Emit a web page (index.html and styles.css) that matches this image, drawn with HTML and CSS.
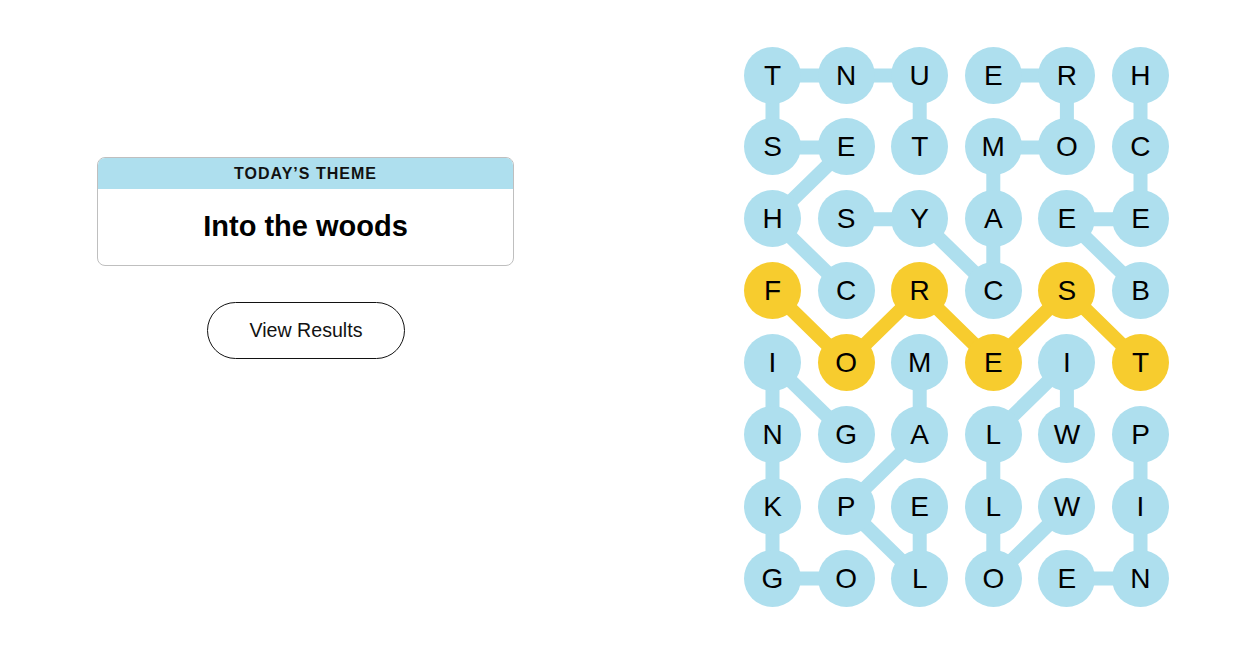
FILE: index.html
```html
<!DOCTYPE html>
<html lang="en">
<head>
<meta charset="utf-8">
<title>Strands</title>
<link rel="stylesheet" href="styles.css">
</head>
<body>
<main class="game">
  <section class="side">
    <div class="theme-card">
      <div class="theme-head">Today’s Theme</div>
      <div class="theme-body">Into the woods</div>
    </div>
    <button class="results-btn" type="button">View Results</button>
  </section>
  <section class="board">
    <svg class="links" viewBox="0 0 425 560" width="425" height="560" aria-hidden="true">
      <g class="blue">
        <path d="M28.5 28.5H175.7V100.4"/>
        <path d="M28.5 28.5V100.4H102.1L28.5 172.2L102.1 244.1"/>
        <path d="M249.3 28.5H322.9V100.4H249.3V244.1"/>
        <path d="M102.1 172.2H175.7L249.3 244.1"/>
        <path d="M396.5 28.5V172.2H322.9L396.5 244.1"/>
        <path d="M28.5 315.9V531.5H102.1"/>
        <path d="M28.5 315.9L102.1 387.8"/>
        <path d="M175.7 315.9V387.8L102.1 459.7L175.7 531.5V459.7"/>
        <path d="M322.9 315.9V387.8"/>
        <path d="M322.9 315.9L249.3 387.8V531.5L322.9 459.7"/>
        <path d="M322.9 531.5H396.5V387.8"/>
      </g>
      <path class="gold" d="M28.5 244.1L102.1 315.9L175.7 244.1L249.3 315.9L322.9 244.1L396.5 315.9"/>
    </svg>
    <div class="grid">
      <span class="cell">T</span><span class="cell">N</span><span class="cell">U</span><span class="cell">E</span><span class="cell">R</span><span class="cell">H</span>
      <span class="cell">S</span><span class="cell">E</span><span class="cell">T</span><span class="cell">M</span><span class="cell">O</span><span class="cell">C</span>
      <span class="cell">H</span><span class="cell">S</span><span class="cell">Y</span><span class="cell">A</span><span class="cell">E</span><span class="cell">E</span>
      <span class="cell span">F</span><span class="cell">C</span><span class="cell span">R</span><span class="cell">C</span><span class="cell span">S</span><span class="cell">B</span>
      <span class="cell">I</span><span class="cell span">O</span><span class="cell">M</span><span class="cell span">E</span><span class="cell">I</span><span class="cell span">T</span>
      <span class="cell">N</span><span class="cell">G</span><span class="cell">A</span><span class="cell">L</span><span class="cell">W</span><span class="cell">P</span>
      <span class="cell">K</span><span class="cell">P</span><span class="cell">E</span><span class="cell">L</span><span class="cell">W</span><span class="cell">I</span>
      <span class="cell">G</span><span class="cell">O</span><span class="cell">L</span><span class="cell">O</span><span class="cell">E</span><span class="cell">N</span>
    </div>
  </section>
</main>
</body>
</html>
```

FILE: styles.css
```css
* { box-sizing: border-box; }

html, body {
  margin: 0;
  padding: 0;
  background: #ffffff;
}

body {
  font-family: "Liberation Sans", Arial, sans-serif;
  color: #000000;
  width: 1250px;
  height: 658px;
  overflow: hidden;
}

.game {
  display: flex;
  align-items: flex-start;
  gap: 230px;
  padding: 46.5px 0 0 97px;
}

.side {
  width: 417px;
  margin-top: 110.5px;
  display: flex;
  flex-direction: column;
  align-items: center;
}

.theme-card {
  width: 417px;
  border: 1px solid #bfbfbf;
  border-radius: 8px;
  overflow: hidden;
  background: #fff;
}

.theme-head {
  height: 31px;
  background: #aedfee;
  display: flex;
  align-items: center;
  justify-content: center;
  font-size: 16px;
  font-weight: 700;
  letter-spacing: 1px;
  text-transform: uppercase;
  color: #111;
  padding-top: 1px;
}

.theme-body {
  height: 76px;
  display: flex;
  align-items: center;
  justify-content: center;
  font-size: 29px;
  font-weight: 700;
  color: #000;
  padding-bottom: 2px;
}

.results-btn {
  margin-top: 36px;
  width: 198px;
  height: 57px;
  border: 1.5px solid #121212;
  border-radius: 30px;
  background: #fff;
  font-family: "Liberation Sans", Arial, sans-serif;
  font-size: 19.6px;
  color: #121212;
  padding: 0;
  margin-left: 1px;
}

.board {
  position: relative;
  width: 425px;
  height: 560px;
}

.links {
  position: absolute;
  left: 0;
  top: 0;
}

.links path {
  fill: none;
  stroke-width: 14;
  stroke-linejoin: round;
}

.links .blue path { stroke: #aedfee; }
.links .gold { stroke: #f7cc2e; }

.grid {
  position: relative;
  display: grid;
  grid-template-columns: repeat(6, 57px);
  grid-auto-rows: 57px;
  column-gap: 16.6px;
  row-gap: 14.86px;
}

.cell {
  width: 57px;
  height: 57px;
  border-radius: 50%;
  background: #aedfee;
  display: flex;
  align-items: center;
  justify-content: center;
  font-size: 28px;
  line-height: 1;
  color: #000;
  padding-top: 1px;
}

.cell.span { background: #f7cc2e; }
```
